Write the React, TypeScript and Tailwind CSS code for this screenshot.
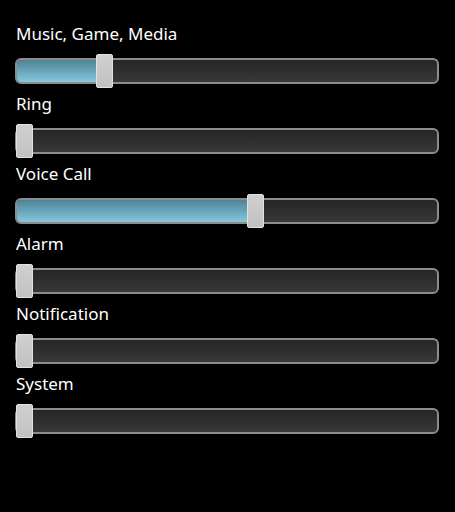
import React from "react";

type Stream = { label: string; thumb: number };

// thumb = left edge of the thumb, in px from the track's left edge
const streams: Stream[] = [
  { label: "Music, Game, Media", thumb: 81 },
  { label: "Ring", thumb: 1 },
  { label: "Voice Call", thumb: 232 },
  { label: "Alarm", thumb: 1 },
  { label: "Notification", thumb: 1 },
  { label: "System", thumb: 1 },
];

function VolumeRow({ label, thumb }: Stream) {
  const fill = thumb + 9;
  return (
    <div className="flex flex-col">
      <div className="h-[24px] pl-[1px] pt-[2px] text-[17px] leading-[24px] text-white">{label}</div>
      <div className="relative mt-[14px] h-[26px] w-[424px]">
        {/* Track */}
        <div className="absolute inset-0 overflow-hidden rounded-[6px] border-2 border-[#8c8c8c] bg-gradient-to-b from-[#262626] to-[#383838]">
          {thumb > 1 && (
            <div
              className="h-full bg-gradient-to-b from-[#4e8496] to-[#86c8de]"
              style={{ width: fill }}
            />
          )}
        </div>

        {/* Thumb */}
        <div
          className="absolute top-[-4px] h-[34px] w-[17px] rounded-[2px] border border-[#e2e2e2] bg-gradient-to-b from-[#cfcfcf] to-[#c2c2c2]"
          style={{ left: thumb }}
        />
      </div>
      <div className="h-[6px]" />
    </div>
  );
}

export default function App() {
  return (
    <div
      className="h-[512px] w-[455px] bg-black pl-[15px] pt-[20px]"
      style={{ fontFamily: '"Noto Sans", "DejaVu Sans", sans-serif' }}
    >
      {streams.map((s) => (
        <VolumeRow key={s.label} {...s} />
      ))}
    </div>
  );
}
